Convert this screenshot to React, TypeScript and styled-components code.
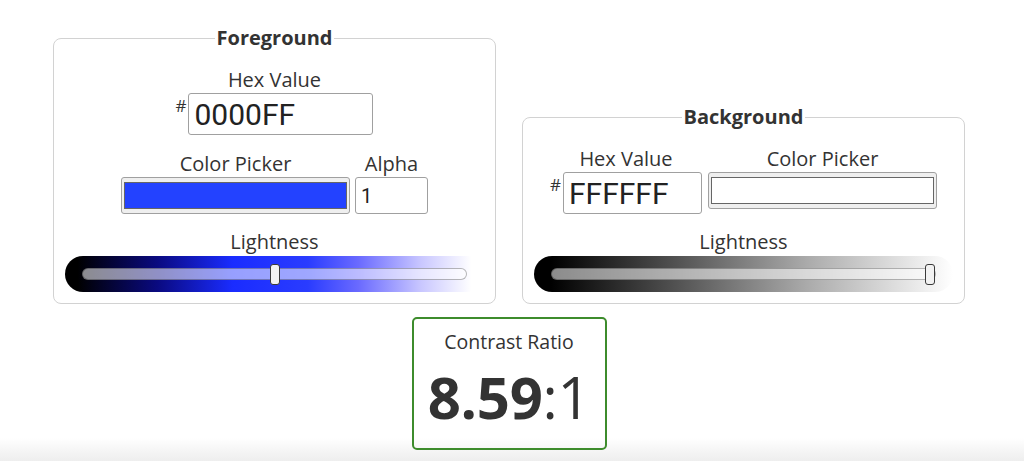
import React from "react";
import styled, { createGlobalStyle } from "styled-components";

const GlobalStyle = createGlobalStyle`
  html {
    height: 100%;
    background: linear-gradient(to bottom, #fff 0, #fff 438px, #f5f5f5 451px, #eeeeee 461px);
  }
  body {
    margin: 0;
    font-family: "Open Sans", "Noto Sans", sans-serif;
    color: #333;
  }
`;

const Page = styled.div`
  width: 912px;
  margin-left: 53px;
  padding-top: 27px;
  display: flex;
  flex-direction: column;
`;

const Panels = styled.div`
  display: flex;
  align-items: flex-end;
  gap: 26px;
`;

const Fieldset = styled.fieldset`
  width: 443px;
  box-sizing: border-box;
  margin: 0;
  padding: 0 0 11px;
  border: 1px solid #d2d2d2;
  border-radius: 8px;
  display: flex;
  flex-direction: column;
  align-items: center;
`;

const Legend = styled.legend`
  margin: 0 auto;
  padding: 0 2px;
  font-size: 20px;
  line-height: 22px;
  font-weight: 700;
  color: #333;
`;

const Row = styled.div<{ $top: number; $gap: number }>`
  display: flex;
  align-items: flex-start;
  justify-content: center;
  gap: ${(p) => p.$gap}px;
  margin-top: ${(p) => p.$top}px;
`;

const Group = styled.div`
  display: flex;
  flex-direction: column;
  align-items: center;
`;

const Label = styled.div`
  font-size: 20px;
  line-height: 20px;
  margin-bottom: 3px;
  color: #333;
  white-space: nowrap;
`;

const HexLine = styled.div`
  display: flex;
  align-items: flex-start;
  gap: 2px;
`;

const Hash = styled.span`
  font-size: 17px;
  line-height: 20px;
  margin-top: 3px;
  color: #333;
`;

const TextInput = styled.input<{ $w: number; $h: number; $size: number }>`
  box-sizing: border-box;
  width: ${(p) => p.$w}px;
  height: ${(p) => p.$h}px;
  margin: 0;
  padding: 0 5px;
  border: 1px solid #a0a0a0;
  border-radius: 3px;
  background: #fff;
  font-family: Roboto, "Liberation Sans", sans-serif;
  font-size: ${(p) => p.$size}px;
  color: #222;
  outline: none;
`;

const Picker = styled.button<{ $h: number }>`
  box-sizing: border-box;
  width: 229px;
  height: ${(p) => p.$h}px;
  margin: 0;
  padding: 4px 2px 4px;
  border: 1px solid #a0a0a0;
  border-radius: 3px;
  background: #efefef;
  display: flex;
  cursor: pointer;
`;

const Swatch = styled.span<{ $color: string }>`
  flex: 1;
  border: 1px solid #666;
  background: ${(p) => p.$color};
`;

const SliderWrap = styled.div`
  margin-top: 18px;
  align-self: stretch;
  display: flex;
  flex-direction: column;
  align-items: center;
  padding: 0 11px;
`;

const SliderLabel = styled(Label)`
  margin-bottom: 4px;
`;

const Slider = styled.div<{ $gradient: string }>`
  align-self: stretch;
  height: 36px;
  border-radius: 18px;
  background: ${(p) => p.$gradient};
  padding: 0 17px;
  display: flex;
  align-items: center;
`;

const Track = styled.div`
  position: relative;
  flex: 1;
  height: 12px;
  box-sizing: border-box;
  border: 1px solid rgba(0, 0, 0, 0.28);
  border-radius: 6px;
  background: rgba(255, 255, 255, 0.55);
`;

const Thumb = styled.div`
  position: absolute;
  top: -5px;
  width: 10px;
  height: 21px;
  box-sizing: border-box;
  margin-left: -5px;
  border: 1.5px solid #3a3a3a;
  border-radius: 3px;
  background: #f2f2f2;
`;

const Result = styled.div`
  align-self: center;
  margin-top: 13px;
  width: 195px;
  box-sizing: border-box;
  border: 2px solid #3d8c2c;
  border-radius: 5px;
  padding: 12px 0 22px;
  text-align: center;
`;

const ResultLabel = styled.div`
  font-size: 19.5px;
  line-height: 22px;
  color: #333;
`;

const Ratio = styled.div`
  margin-top: 15px;
  font-size: 58px;
  line-height: 58px;
  color: #333;
  letter-spacing: -0.3px;
  b {
    font-weight: 700;
  }
`;

type LightnessProps = { gradient: string; value: number };

const Lightness: React.FC<LightnessProps> = ({ gradient, value }) => (
  <SliderWrap>
    <SliderLabel>Lightness</SliderLabel>
    <Slider $gradient={gradient}>
      <Track>
        <Thumb style={{ left: `calc(5px + (100% - 10px) * ${value})` }} />
      </Track>
    </Slider>
  </SliderWrap>
);

const App: React.FC = () => {
  return (
    <>
      <GlobalStyle />
      <Page>
        <Panels>
          <Fieldset>
            <Legend>Foreground</Legend>
            <Row $top={21} $gap={6}>
              <Group>
                <Label>Hex Value</Label>
                <HexLine>
                  <Hash>#</Hash>
                  <TextInput $w={185} $h={42} $size={30} defaultValue="0000FF" />
                </HexLine>
              </Group>
            </Row>
            <Row $top={19} $gap={5}>
              <Group>
                <Label>Color Picker</Label>
                <Picker $h={37}>
                  <Swatch $color="#2342ff" />
                </Picker>
              </Group>
              <Group>
                <Label>Alpha</Label>
                <TextInput $w={73} $h={37} $size={20} defaultValue="1" />
              </Group>
            </Row>
            <Lightness
              gradient="linear-gradient(90deg, #000 3%, #0a0a80 22%, #1a2cff 40%, #2a3cff 58%, #6a6aff 70%, #c9c7ff 85%, #fff 97%)"
              value={0.5}
            />
          </Fieldset>
          <Fieldset>
            <Legend>Background</Legend>
            <Row $top={21} $gap={6}>
              <Group>
                <Label>Hex Value</Label>
                <HexLine>
                  <Hash>#</Hash>
                  <TextInput $w={139} $h={42} $size={30} defaultValue="FFFFFF" />
                </HexLine>
              </Group>
              <Group>
                <Label>Color Picker</Label>
                <Picker $h={37}>
                  <Swatch $color="#ffffff" />
                </Picker>
              </Group>
            </Row>
            <Lightness
              gradient="linear-gradient(90deg, #000 4%, #555 35%, #aaa 65%, #fff 100%)"
              value={1}
            />
          </Fieldset>
        </Panels>
        <Result>
          <ResultLabel>Contrast Ratio</ResultLabel>
          <Ratio>
            <b>8.59</b>:1
          </Ratio>
        </Result>
      </Page>
    </>
  );
};

export default App;
